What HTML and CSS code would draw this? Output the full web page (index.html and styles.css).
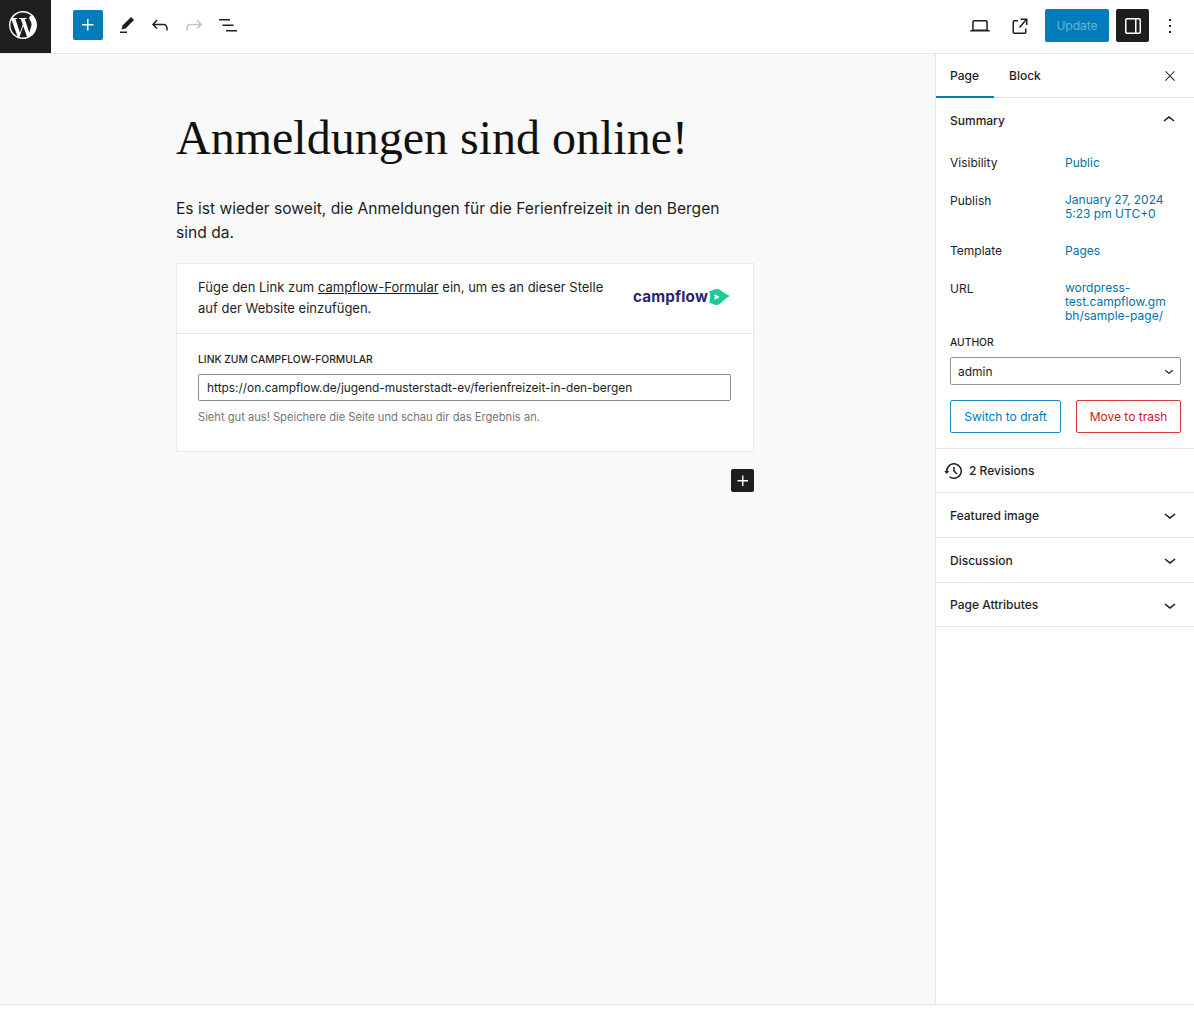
FILE: index.html
```html
<!DOCTYPE html>
<html lang="de">
<head>
<meta charset="utf-8">
<title>Edit Page</title>
<link rel="stylesheet" href="styles.css">
</head>
<body>
<div class="app">
  <header class="topbar">
    <div class="wp-logo">
      <svg viewBox="0 0 80 80" width="28" height="28" fill="#fff"><path d="M40 0C18 0 0 18 0 40s18 40 40 40 40-18 40-40S62 0 40 0zM4 40c0-5.200 1.100-10.200 3.100-14.700l17.200 47.100C12.300 66.600 4 54.300 4 40zm36 36c-3.500 0-6.900-.5-10.200-1.500l10.800-31.400 11.100 30.300c.1.200.2.300.2.500C48.200 75.200 44.200 76 40 76zm5-52.900c2.200-.1 4.100-.3 4.100-.3 1.900-.2 1.700-3.100-.2-3-5.800.5-9.500.5-9.500.5s-3.500 0-9.400-.5c-1.900-.1-2.200 2.900-.2 3 0 0 1.800.2 3.800.3l5.600 15.300-7.800 23.500-13-38.800c2.200-.1 4.100-.3 4.100-.3 1.900-.2 1.700-3.100-.2-3-5.800.5-9.500.5-9.500.5-.7 0-1.500 0-2.300-.1C16.800 9.500 27.700 4 40 4c9.400 0 17.900 3.600 24.300 9.400h-.5c-3.500 0-6 3.100-6 6.400 0 3 1.700 5.500 3.600 8.500 1.400 2.400 3 5.500 3 10 0 3.100-1.200 6.700-2.800 11.700l-3.600 12.100L45 23.100zm13.100 48c10.700-6.200 17.900-17.800 17.900-31 0-6.200-1.600-12.100-4.400-17.200.2 1.100.2 2.300.2 3.600 0 3.600-.7 7.700-2.700 12.800l-11 31.800z"/></svg>
    </div>
    <div class="tools">
      <button class="add-btn" type="button"><svg viewBox="0 0 24 24" width="24" height="24" fill="#fff"><path d="M11 12.500V17.500H12.500V12.500H17.500V11H12.500V6H11V11H6V12.500H11Z"/></svg></button>
      <span class="icon"><svg viewBox="0 0 24 24" width="24" height="24" fill="#1e1e1e"><path d="m19 7-3-3-8.500 8.500-1 4 4-1L19 7Zm-7 11.500H5V20h7v-1.500Z"/></svg></span>
      <span class="icon undo"><svg viewBox="0 0 24 24" width="24" height="24" fill="#1e1e1e"><path d="M18.300 11.700c-.6-.6-1.400-.9-2.300-.9H6.700l2.900-3.300-1.100-1-4.500 5L8.500 16l1-1-2.700-2.700H16c.5 0 .9.200 1.300.5 1 1 1 3.400 1 4.500v.3h1.500v-.2c0-1.500 0-4.300-1.500-5.700z"/></svg></span>
      <span class="icon"><svg viewBox="0 0 24 24" width="24" height="24" fill="#c4c4c4"><path d="M15.600 6.500l-1.100 1 2.900 3.300H8c-.9 0-1.700.3-2.300.9-1.400 1.500-1.400 4.200-1.400 5.600v.2h1.500v-.3c0-1.100 0-3.500 1-4.500.3-.3.700-.5 1.300-.5h9.200L14.500 15l1.100 1.100 4.600-4.600-4.600-5z"/></svg></span>
      <span class="icon"><svg viewBox="0 0 24 24" width="24" height="24" fill="#1e1e1e"><path d="M3 6h11v1.500H3V6zm3.500 5.500h11V13h-11v-1.500zM21 17H10v1.500h11V17z"/></svg></span>
    </div>
    <div class="actions">
      <span class="icon"><svg viewBox="0 0 24 24" width="24" height="24" fill="#1e1e1e"><path d="M20.500 16h-.7V8c0-1.100-.9-2-2-2H6.200c-1.100 0-2 .9-2 2v8h-.7c-.8 0-1.500.7-1.500 1.500h20c0-.8-.7-1.500-1.500-1.500zM5.700 8c0-.3.200-.5.500-.5h11.600c.3 0 .5.200.5.500v7.600H5.700V8z"/></svg></span>
      <span class="icon external"><svg viewBox="0 0 24 24" width="24" height="24" fill="#1e1e1e"><path d="M19.500 4.500h-7V6h4.440l-5.970 6.970 1.140.98L18 7.030V11h1.500V4.500zM6.500 6H10v1.500H6.500c-.28 0-.5.220-.5.500v10c0 .28.220.5.500.5h10c.28 0 .5-.22.500-.5v-3.500h1.500V18c0 1.100-.9 2-2 2h-10c-1.100 0-2-.9-2-2V8c0-1.100.9-2 2-2z"/></svg></span>
      <button class="update-btn" type="button">Update</button>
      <button class="settings-btn" type="button"><svg viewBox="0 0 24 24" width="24" height="24" fill="#fff"><path d="M18 4H6c-1.100 0-2 .9-2 2v12c0 1.100.9 2 2 2h12c1.100 0 2-.9 2-2V6c0-1.100-.9-2-2-2zM5.500 18V6c0-.3.200-.5.500-.5h8v13H6c-.3 0-.5-.2-.5-.5zm13 0c0 .3-.2.500-.5.500h-2.500v-13H18c.3 0 .5.200.5.500v12z"/></svg></button>
      <span class="icon more"><svg viewBox="0 0 24 24" width="24" height="24" fill="#1e1e1e"><path d="M13 19h-2v-2h2v2zm0-6h-2v-2h2v2zm0-6h-2V5h2v2z"/></svg></span>
    </div>
  </header>

  <div class="workspace">
    <main class="canvas">
      <div class="editor">
        <h1 class="title">Anmeldungen sind online!</h1>
        <p class="lead">Es ist wieder soweit, die Anmeldungen für die Ferienfreizeit in den Bergen sind da.</p>
        <section class="block">
          <div class="block-head">
            <p class="block-intro">Füge den Link zum <u>campflow-Formular</u> ein, um es an dieser Stelle auf der Website einzufügen.</p>
            <div class="brand">
              <span class="brand-name">campflow</span>
              <svg viewBox="0 0 22 16" width="22" height="16"><path fill="#1fc998" fill-rule="evenodd" d="M1 2C4 2 6 0 9 0c4 0 6 4 13 7-7 3-9 9-13 9-3 0-5-2-8-2 1.500-3 1.500-9 0-12Zm5 3.500 3.500 1L11.500 8l-2 1.500-3.500 1L7 8 6 5.500Z"/></svg>
            </div>
          </div>
          <div class="block-body">
            <label class="field-label">LINK ZUM CAMPFLOW-FORMULAR</label>
            <div class="field-input">https://on.campflow.de/jugend-musterstadt-ev/ferienfreizeit-in-den-bergen</div>
            <p class="field-help">Sieht gut aus! Speichere die Seite und schau dir das Ergebnis an.</p>
          </div>
        </section>
        <div class="inserter-row">
          <button class="inserter" type="button"><svg viewBox="0 0 24 24" width="22" height="22" fill="#fff"><path d="M11 12.500V17.500H12.500V12.500H17.500V11H12.500V6H11V11H6V12.500H11Z"/></svg></button>
        </div>
      </div>
    </main>

    <aside class="sidebar">
      <div class="tabs">
        <span class="tab active">Page</span>
        <span class="tab">Block</span>
        <span class="close"><svg viewBox="0 0 24 24" width="16" height="16" fill="#1e1e1e"><path d="M13 11.800l6.100-6.300-1-1-6.100 6.200-6.100-6.200-1 1 6.100 6.300-6.500 6.700 1 1 6.500-6.600 6.500 6.600 1-1z"/></svg></span>
      </div>

      <section class="panel summary">
        <div class="panel-head">
          <span>Summary</span>
          <svg viewBox="0 0 24 24" width="24" height="24" fill="#1e1e1e"><path d="M6.500 12.400L12 8l5.500 4.400-.9 1.200L12 10l-4.500 3.600-1-1.200z"/></svg>
        </div>
        <dl class="meta">
          <dt>Visibility</dt><dd>Public</dd>
          <dt>Publish</dt><dd class="tight">January 27, 2024<br>5:23 pm UTC+0</dd>
          <dt>Template</dt><dd>Pages</dd>
          <dt>URL</dt><dd class="tight">wordpress-<br>test.campflow.gm<br>bh/sample-page/</dd>
        </dl>
        <div class="author-label">AUTHOR</div>
        <div class="author-select">
          <span>admin</span>
          <svg viewBox="0 0 24 24" width="18" height="18" fill="#1e1e1e"><path d="M17.500 11.600L12 16l-5.500-4.400.9-1.200L12 14l4.500-3.600 1 1.200z"/></svg>
        </div>
        <div class="post-actions">
          <button class="btn-draft" type="button">Switch to draft</button>
          <button class="btn-trash" type="button">Move to trash</button>
        </div>
      </section>

      <div class="revisions">
        <svg viewBox="0 0 24 24" width="24" height="24" fill="#1e1e1e"><path d="M5.500 12h1.750l-2.500 3-2.500-3H4a8 8 0 1 1 3.134 6.350l.907-1.194A6.500 6.500 0 1 0 5.500 12zm9.530 1.970l-2.280-2.280V8.500a.75.75 0 0 0-1.500 0V12a.747.747 0 0 0 .218.529l2.500 2.500a.75.75 0 1 0 1.060-1.061z"/></svg>
        <span>2 Revisions</span>
      </div>

      <div class="panel-row"><span>Featured image</span><svg viewBox="0 0 24 24" width="24" height="24" fill="#1e1e1e"><path d="M17.500 11.600L12 16l-5.500-4.400.9-1.200L12 14l4.500-3.600 1 1.200z"/></svg></div>
      <div class="panel-row"><span>Discussion</span><svg viewBox="0 0 24 24" width="24" height="24" fill="#1e1e1e"><path d="M17.500 11.600L12 16l-5.500-4.400.9-1.200L12 14l4.500-3.600 1 1.200z"/></svg></div>
      <div class="panel-row last"><span>Page Attributes</span><svg viewBox="0 0 24 24" width="24" height="24" fill="#1e1e1e"><path d="M17.500 11.600L12 16l-5.500-4.400.9-1.200L12 14l4.500-3.600 1 1.200z"/></svg></div>
    </aside>
  </div>
  <div class="statusbar"></div>
</div>
</body>
</html>
```
FILE: styles.css
```css
* { box-sizing: border-box; }
html, body { margin: 0; height: 100%; background: #fff; }
body { font-family: Inter, "Liberation Sans", sans-serif; color: #1e1e1e; overflow: hidden; }
button { font-family: inherit; cursor: pointer; padding: 0; }
svg { display: block; flex: none; }

.app { height: 1010px; display: flex; flex-direction: column; }

.topbar { height: 54px; flex: none; display: flex; align-items: flex-start; border-bottom: 1px solid #e6e6e6; padding-right: 12px; }
.wp-logo { width: 51px; height: 53px; background: #1e1e1e; display: flex; justify-content: flex-start; padding: 11px 0 0 9px; }
.tools { display: flex; align-items: center; margin: 10px 0 0 22px; gap: 10px; height: 30px; }
.add-btn { width: 30px; height: 30px; background: #007cba; border: 0; border-radius: 2px; display: flex; align-items: center; justify-content: center; margin-right: 2px; }
.icon { display: block; width: 24px; height: 24px; }
.undo { margin-left: -1px; }
.actions { margin: 9px 0 0 auto; display: flex; align-items: center; height: 33px; }
.external { margin-left: 16px; }
.update-btn { width: 64px; height: 33px; margin-left: 13px; background: #007cba; color: #6ab4dd; border: 0; border-radius: 2px; font-size: 12px; }
.settings-btn { width: 33px; height: 33px; margin-left: 7px; background: #1e1e1e; border: 0; border-radius: 2px; display: flex; align-items: center; justify-content: center; }
.more { margin-left: 9px; }

.workspace { flex: none; height: 950px; display: flex; }
.canvas { flex: 1; background: #f9f9f9; padding-top: 54px; }
.editor { width: 578px; margin-left: 176px; }
.title { margin: 0; font-family: "Liberation Serif", serif; font-weight: 400; font-size: 48px; line-height: 60px; color: #111; white-space: nowrap; }
.lead { margin: 29px 0 0; font-size: 15.600px; line-height: 24px; color: #1e1e1e; }

.block { margin-top: 18px; background: #fff; border: 1px solid #ebebeb; box-shadow: 0 0 1px rgba(0,0,0,.05); height: 189px; }
.block-head { height: 70px; padding: 0 23px 2px 21px; display: flex; align-items: center; justify-content: space-between; border-bottom: 1px solid #e6e6e6; }
.block-intro { margin: 0; width: 412px; font-size: 13px; line-height: 21px; }
.brand { display: flex; align-items: center; margin-bottom: 2px; }
.brand-name { font-weight: 700; font-size: 15.200px; line-height: 16px; color: #2b2472; letter-spacing: .2px; }
.block-body { padding: 18px 22px 0 21px; }
.field-label { display: block; font-size: 10.300px; font-weight: 500; line-height: 14px; color: #1e1e1e; }
.field-input { margin-top: 8px; height: 27px; border: 1px solid #8c8c8c; border-radius: 2px; padding: 0 8px; font-size: 11.900px; line-height: 25px; }
.field-help { margin: 9px 0 0; font-size: 11.150px; line-height: 14px; color: #757575; }

.inserter-row { display: flex; justify-content: flex-end; margin-top: 17px; }
.inserter { width: 23px; height: 23px; background: #1e1e1e; border: 0; border-radius: 2px; display: flex; align-items: center; justify-content: center; }

.sidebar { width: 259px; flex: none; background: #fff; border-left: 1px solid #e6e6e6; font-size: 12px; }
.tabs { height: 44px; display: flex; align-items: center; border-bottom: 1px solid #e0e0e0; }
.tab { height: 44px; padding: 0 14px; line-height: 43px; font-weight: 500; }
.tab.active { width: 58px; border-bottom: 2px solid #007cba; }
.tab + .tab { padding-left: 15px; }
.close { margin-left: auto; margin-right: 16px; }

.summary { border-bottom: 1px solid #e6e6e6; height: 351px; padding: 0 13px 0 14px; }
.panel-head { height: 44px; display: flex; align-items: center; justify-content: space-between; font-weight: 500; }
.meta { margin: 0; display: grid; grid-template-columns: 115px 1fr; grid-template-rows: 38px 50px 38px 53px; padding-top: 11px; line-height: 14px; height: 190px; }
.meta dt { margin: 0; color: #1e1e1e; padding-top: 3px; }
.meta dd { margin: 0; color: #0073aa; padding-top: 3px; }
.meta dd.tight { padding-top: 2px; }
.author-label { margin-top: 3px; font-size: 10.300px; font-weight: 500; line-height: 14px; }
.author-select { margin-top: 8px; height: 28px; border: 1px solid #949494; border-radius: 2px; display: flex; align-items: center; justify-content: space-between; padding: 0 2px 0 7px; }
.post-actions { margin-top: 15px; display: flex; justify-content: space-between; }
.btn-draft, .btn-trash { height: 33px; background: #fff; border-radius: 2px; font-size: 12px; }
.btn-draft { width: 111px; border: 1px solid #1f8ac0; color: #007cba; }
.btn-trash { width: 105px; border: 1px solid #d63b3b; color: #cc1818; }

.revisions { height: 44px; display: flex; align-items: center; gap: 3px; padding-left: 6px; font-weight: 500; border-bottom: 1px solid #e6e6e6; }
.panel-row { height: 45px; display: flex; align-items: center; justify-content: space-between; padding: 0 12px 0 14px; font-weight: 500; border-bottom: 1px solid #e6e6e6; }
.panel-row.last { height: 44px; }

.statusbar { flex: none; height: 6px; border-top: 1px solid #e6e6e6; background: #fff; }
```
